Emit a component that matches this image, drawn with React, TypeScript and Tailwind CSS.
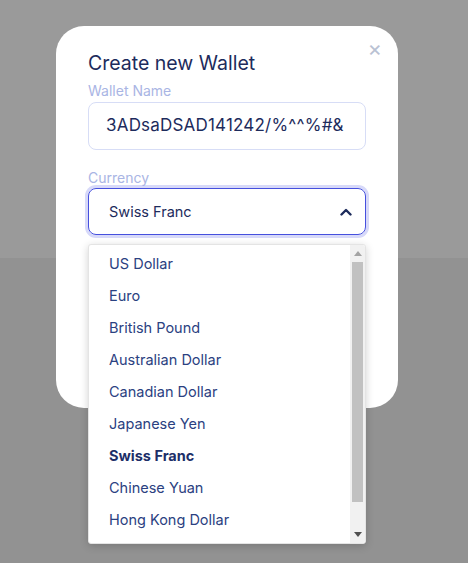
import React from "react"

const currencies = [
  "US Dollar",
  "Euro",
  "British Pound",
  "Australian Dollar",
  "Canadian Dollar",
  "Japanese Yen",
  "Swiss Franc",
  "Chinese Yuan",
  "Hong Kong Dollar",
]

export default function App() {
  const selected = "Swiss Franc"

  return (
    <div
      className="relative flex h-[563px] w-[468px] flex-col overflow-hidden"
      style={{ fontFamily: "Inter, 'Noto Sans', sans-serif" }}
    >
      {/* backdrop */}
      <div className="h-[258px] bg-[#9a9a9a]" />
      <div className="flex-1 bg-[#929292]" />

      {/* modal */}
      <div className="absolute left-[56px] top-[26px] h-[382px] w-[342px] rounded-[28px] bg-white px-8 pt-[25px]">
        <button className="absolute right-[16px] top-[11px] text-[22px] leading-none text-[#b9c1d3]">
          ×
        </button>
        <h2 className="text-[19.5px] leading-6 text-[#1d2b5c]">Create new Wallet</h2>

        <label className="mt-[6px] block text-[14px] leading-5 text-[#a9b5e4]">
          Wallet Name
        </label>
        <div className="mt-[1px] flex h-[48px] w-[278px] items-center rounded-lg border border-[#d7ddf6] pl-[17px] text-[17px] tracking-[0.2px] text-[#1d2b5c]">
          3ADsaDSAD141242/%^^%#&amp;
        </div>

        <label className="mt-[18px] block text-[14px] leading-5 text-[#a9b5e4]">
          Currency
        </label>
        <div className="flex h-[47px] w-[278px] items-center justify-between rounded-lg border border-[#4650de] pl-5 pr-[13px] text-[14.5px] text-[#1d2b5c] ring-[3px] ring-[#d7d9f9]">
          <span>{selected}</span>
          <svg width="12" height="8" viewBox="0 0 12 8" fill="none">
            <path d="M1.5 6.5 6 2l4.5 4.5" stroke="#1d2b5c" strokeWidth="2.4" strokeLinecap="round" strokeLinejoin="round" />
          </svg>
        </div>
      </div>

      {/* dropdown list */}
      <div className="absolute left-[88px] top-[244px] flex h-[300px] w-[278px] overflow-hidden rounded-[3px] border border-[#e4e4e4] bg-white shadow-[0_2px_8px_rgba(0,0,0,0.18)]">
        <ul className="flex-1 pt-[3px]">
          {currencies.map((c) => (
            <li
              key={c}
              className={`flex h-8 items-center pl-5 text-[14.5px] ${
                c === selected ? "font-bold text-[#1d2f68]" : "text-[#2b4181]"
              }`}
            >
              {c}
            </li>
          ))}
        </ul>
        {/* scrollbar */}
        <div className="flex w-[15px] flex-col bg-[#f1f1f1]">
          <div className="flex h-[17px] items-center justify-center">
            <svg width="8" height="5" viewBox="0 0 8 5">
              <path d="M0 5 4 0l4 5z" fill="#a3a3a3" />
            </svg>
          </div>
          <div className="mx-[2px] h-[240px] bg-[#c1c1c1]" />
          <div className="flex-1" />
          <div className="flex h-[17px] items-center justify-center">
            <svg width="8" height="5" viewBox="0 0 8 5">
              <path d="M0 0h8L4 5z" fill="#505050" />
            </svg>
          </div>
        </div>
      </div>
    </div>
  )
}
